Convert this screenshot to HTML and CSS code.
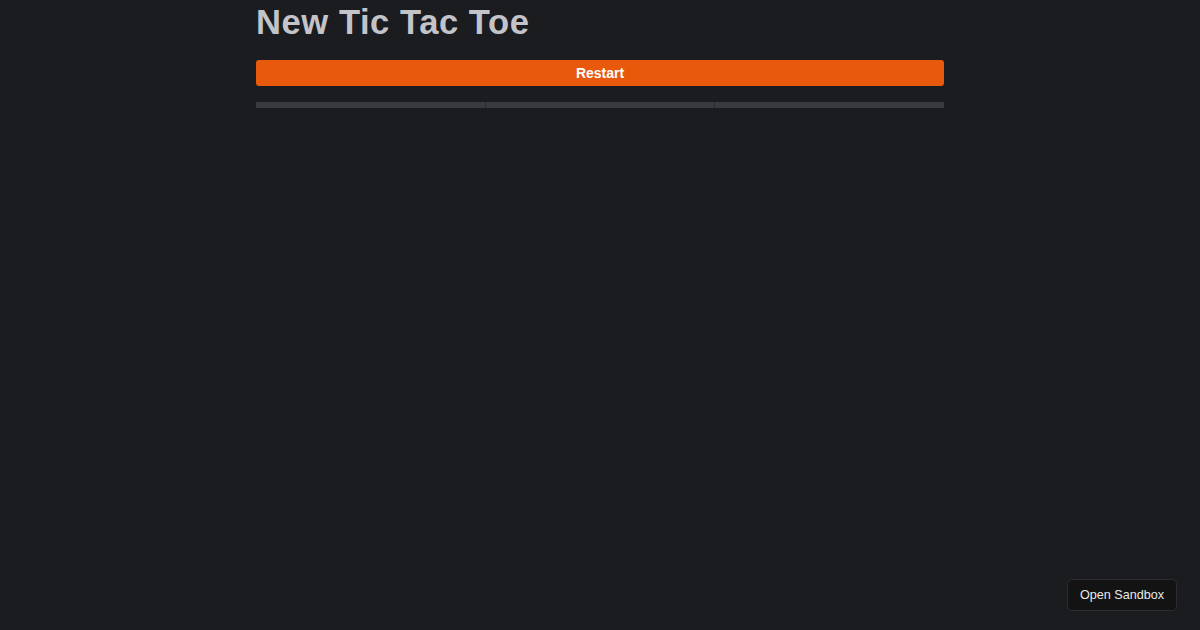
FILE: index.html
```html
<!DOCTYPE html>
<html lang="en">
<head>
<meta charset="utf-8">
<title>New Tic Tac Toe</title>
<link rel="stylesheet" href="styles.css">
</head>
<body>
<main class="game">
  <h1 class="title">New Tic Tac Toe</h1>
  <button class="restart" type="button">Restart</button>
  <div class="board">
    <div class="cell"></div>
    <div class="cell"></div>
    <div class="cell"></div>
  </div>
</main>
<a class="sandbox" href="#">Open Sandbox</a>
</body>
</html>
```
FILE: styles.css
```css
html, body {
  margin: 0;
  padding: 0;
  background: #1b1c20;
  height: 100%;
}
body {
  font-family: "Liberation Sans", Arial, sans-serif;
}
.game {
  width: 688px;
  margin: 0 auto;
  padding-top: 2px;
  display: flex;
  flex-direction: column;
}
.title {
  margin: 0 0 18px 0;
  font-size: 34.6px;
  line-height: 40px;
  font-weight: 700;
  letter-spacing: 0.55px;
  color: #c3c4c9;
}
.restart {
  height: 26px;
  border: none;
  border-radius: 3px;
  background: #e8590c;
  color: #ffffff;
  font-family: "Liberation Sans", Arial, sans-serif;
  font-weight: 700;
  font-size: 14px;
  padding: 0;
  margin: 0 0 16px 0;
}
.board {
  display: grid;
  grid-template-columns: repeat(3, 1fr);
  gap: 1px;
  background: #2a2b30;
  height: 6px;
}
.cell {
  background: #393a40;
}
.sandbox {
  position: fixed;
  right: 23px;
  bottom: 19px;
  height: 32px;
  box-sizing: border-box;
  padding: 0 12px 1px 12px;
  display: flex;
  align-items: center;
  background: #131313;
  border: 1px solid #2c2d31;
  border-radius: 5px;
  color: #e8e8e8;
  font-size: 12.6px;
  text-decoration: none;
}
```
